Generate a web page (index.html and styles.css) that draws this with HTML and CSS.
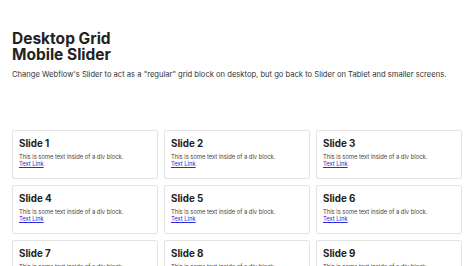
FILE: index.html
```html
<!DOCTYPE html>
<html lang="en">
<head>
    <meta charset="UTF-8">
    <meta name="viewport" content="width=device-width, initial-scale=1.0">
    <title>Desktop Grid Mobile Slider</title>
    <link rel="stylesheet" href="styles.css">
</head>
<body>
    <div class="page">
        <h1 class="title">Desktop Grid<br>Mobile Slider</h1>
        <p class="intro">Change Webflow's Slider to act as a "regular" grid block on desktop, but go back to Slider on Tablet and smaller screens.</p>

        <div class="slider">
            <div class="slide">
                <h2>Slide 1</h2>
                <p>This is some text inside of a div block.</p>
                <a href="#">Text Link</a>
            </div>
            <div class="slide">
                <h2>Slide 2</h2>
                <p>This is some text inside of a div block.</p>
                <a href="#">Text Link</a>
            </div>
            <div class="slide">
                <h2>Slide 3</h2>
                <p>This is some text inside of a div block.</p>
                <a href="#">Text Link</a>
            </div>
            <div class="slide">
                <h2>Slide 4</h2>
                <p>This is some text inside of a div block.</p>
                <a href="#">Text Link</a>
            </div>
            <div class="slide">
                <h2>Slide 5</h2>
                <p>This is some text inside of a div block.</p>
                <a href="#">Text Link</a>
            </div>
            <div class="slide">
                <h2>Slide 6</h2>
                <p>This is some text inside of a div block.</p>
                <a href="#">Text Link</a>
            </div>
            <div class="slide">
                <h2>Slide 7</h2>
                <p>This is some text inside of a div block.</p>
                <a href="#">Text Link</a>
            </div>
            <div class="slide">
                <h2>Slide 8</h2>
                <p>This is some text inside of a div block.</p>
                <a href="#">Text Link</a>
            </div>
            <div class="slide">
                <h2>Slide 9</h2>
                <p>This is some text inside of a div block.</p>
                <a href="#">Text Link</a>
            </div>
        </div>
    </div>
</body>
</html>
```

FILE: styles.css
```css
body {
    margin: 0;
    font-family: Inter, "DejaVu Sans", sans-serif;
    color: #222;
    background: #fff;
    overflow: hidden;
}
.page {
    padding: 31px 12px 0;
}
.title {
    margin: 0;
    font-size: 15.5px;
    line-height: 16px;
    font-weight: bold;
    color: #222;
}
.intro {
    margin: 7px 0 0;
    font-size: 7.6px;
    line-height: 9px;
    color: #333;
}
.slider {
    display: grid;
    grid-template-columns: repeat(3, 1fr);
    gap: 6px;
    margin-top: 51px;
}
.slide {
    height: 49px;
    box-sizing: border-box;
    padding: 7px 6px;
    border: 1px solid #e4e4e4;
    border-radius: 2px;
}
.slide h2 {
    margin: 0;
    font-size: 9.8px;
    line-height: 12px;
    font-weight: bold;
}
.slide p {
    margin: 3px 0 0;
    font-size: 5.8px;
    line-height: 7px;
    color: #444;
}
.slide a {
    display: block;
    font-size: 5.8px;
    line-height: 7px;
    color: #2a2adb;
}
```
